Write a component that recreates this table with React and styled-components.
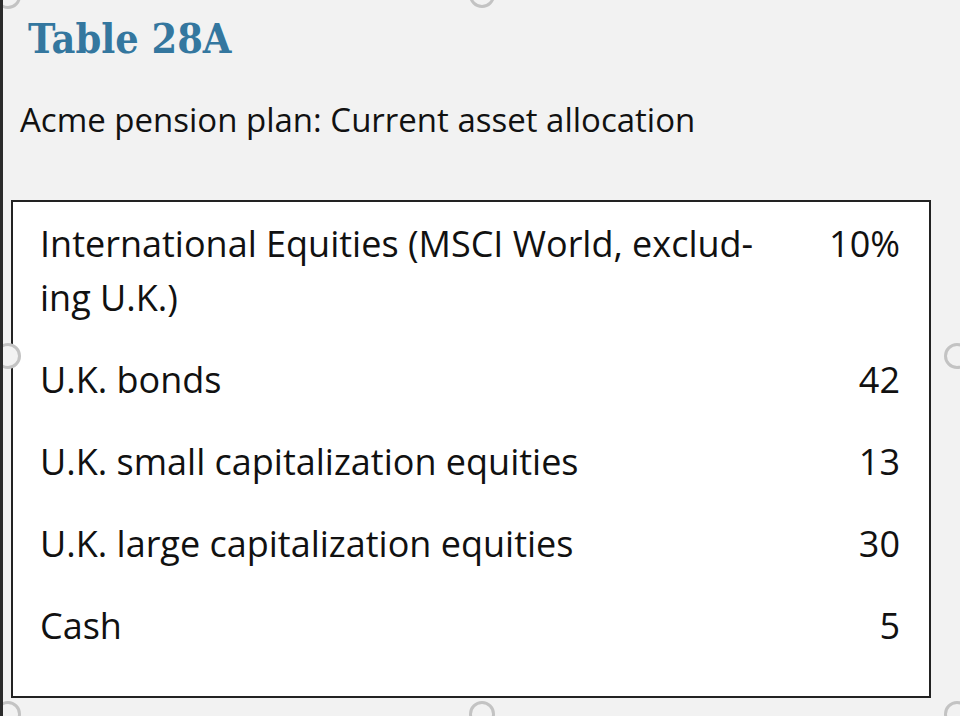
import React from "react";
import styled, { createGlobalStyle } from "styled-components";

const Global = createGlobalStyle`
  html, body { margin: 0; padding: 0; background: #f2f2f2; }
  body { font-family: "Open Sans", "Noto Sans", sans-serif; }
`;

const Page = styled.div`
  position: relative;
  width: 960px;
  height: 716px;
  overflow: hidden;
  box-sizing: border-box;
  border-left: 3px solid #2b2b2b;
  background: #f2f2f2;
  display: flex;
  flex-direction: column;
`;

const Title = styled.h1`
  margin: 15px 0 0 25px;
  font-family: "DejaVu Serif Condensed", "DejaVu Serif", serif;
  font-stretch: condensed;
  font-weight: 700;
  font-size: 41px;
  line-height: 48px;
  color: #34779f;
`;

const Subtitle = styled.p`
  margin: 37px 0 0 17px;
  font-size: 33px;
  line-height: 40px;
  color: #111;
`;

const TableBox = styled.div`
  margin: 60px 0 0 8px;
  width: 920px;
  height: 498px;
  box-sizing: border-box;
  border: 2px solid #222;
  background: #fff;
  padding: 15px 29px 0 27px;
  display: flex;
  flex-direction: column;
  gap: 28px;
`;

const Row = styled.div`
  display: grid;
  grid-template-columns: 1fr auto;
  column-gap: 40px;
  font-size: 36px;
  line-height: 54px;
  color: #111;
`;

const Label = styled.div``;

const Value = styled.div`
  text-align: right;
`;

const Handle = styled.span`
  position: absolute;
  width: 20px;
  height: 20px;
  border-radius: 50%;
  border: 3px solid #c3c3c3;
  background: #f2f2f2;
  left: ${(p) => p.$x - 13}px;
  top: ${(p) => p.$y - 13}px;
`;

const rows = [
  { label: ["International Equities (MSCI World, exclud-", "ing U.K.)"], value: "10%" },
  { label: ["U.K. bonds"], value: "42" },
  { label: ["U.K. small capitalization equities"], value: "13" },
  { label: ["U.K. large capitalization equities"], value: "30" },
  { label: ["Cash"], value: "5" },
];

const handles = [
  [5, -4],
  [479, -5],
  [5, 356],
  [954, 356],
  [5, 714],
  [479, 714],
  [954, 714],
];

export default function App() {
  return (
    <>
      <Global />
      <Page>
        <Title>Table 28A</Title>
        <Subtitle>Acme pension plan: Current asset allocation</Subtitle>
        <TableBox>
          {rows.map((r, i) => (
            <Row key={i}>
              <Label>
                {r.label.map((l, j) => (
                  <React.Fragment key={j}>
                    {j > 0 && <br />}
                    {l}
                  </React.Fragment>
                ))}
              </Label>
              <Value>{r.value}</Value>
            </Row>
          ))}
        </TableBox>
        {handles.map(([x, y], i) => (
          <Handle key={i} $x={x} $y={y} />
        ))}
      </Page>
    </>
  );
}
